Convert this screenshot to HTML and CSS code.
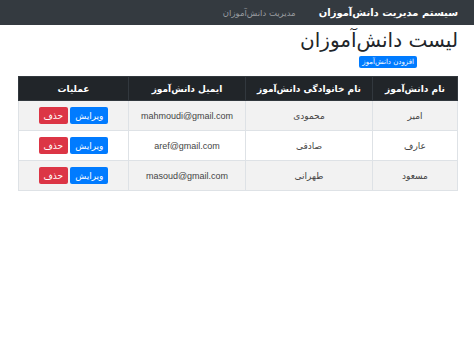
FILE: index.html
```html
<!DOCTYPE html>
<html lang="fa" dir="rtl">
<head>
    <meta charset="UTF-8">
    <meta name="viewport" content="width=device-width, initial-scale=1.0">
    <title>مدیریت دانش‌آموزان</title>
    <link rel="stylesheet" href="styles.css">
</head>
<body>
    <nav class="navbar">
        <a class="brand" href="#">سیستم مدیریت دانش‌آموزان</a>
        <a class="navLink" href="#">مدیریت دانش‌آموزان</a>
    </nav>
    <div class="container">
        <h1 class="title">لیست دانش‌آموزان</h1>
        <div class="addRow">
            <button class="btn btnPrimary btnAdd">افزودن دانش‌آموز</button>
        </div>
        <table class="table">
            <thead>
                <tr>
                    <th class="colName">نام دانش‌آموز</th>
                    <th class="colFamily">نام خانوادگی دانش‌آموز</th>
                    <th class="colEmail">ایمیل دانش‌آموز</th>
                    <th>عملیات</th>
                </tr>
            </thead>
            <tbody>
                <tr>
                    <td>امیر</td>
                    <td>محمودی</td>
                    <td class="email">mahmoudi@gmail.com</td>
                    <td><button class="btn btnPrimary">ویرایش</button><button class="btn btnDanger">حذف</button></td>
                </tr>
                <tr>
                    <td>عارف</td>
                    <td>صادقی</td>
                    <td class="email">aref@gmail.com</td>
                    <td><button class="btn btnPrimary">ویرایش</button><button class="btn btnDanger">حذف</button></td>
                </tr>
                <tr>
                    <td>مسعود</td>
                    <td>طهرانی</td>
                    <td class="email">masoud@gmail.com</td>
                    <td><button class="btn btnPrimary">ویرایش</button><button class="btn btnDanger">حذف</button></td>
                </tr>
            </tbody>
        </table>
    </div>
</body>
</html>
```
FILE: styles.css
```css
body{
    margin: 0;
    direction: rtl;
    font-family: "DejaVu Sans", "Noto Sans", sans-serif;
    color: #212529;
    background-color: #fff;
}

.navbar{
    background-color: #343a40;
    height: 25px;
    display: flex;
    align-items: center;
    padding: 0 16px;
    gap: 23px;
}

.brand{
    color: #fff;
    font-size: 10px;
    font-weight: bold;
    text-decoration: none;
}

.navLink{
    color: #9a9da0;
    font-size: 8.5px;
    text-decoration: none;
}

.container{
    padding: 0 16px 0 18px;
}

.title{
    margin: 2px 0 3px;
    font-size: 20px;
    font-weight: normal;
    line-height: 26px;
}

.addRow{
    display: flex;
    padding-right: 41px;
}

.btn{
    border: none;
    border-radius: 2px;
    color: #fff;
    font-family: inherit;
    font-size: 9px;
    padding: 0 5px;
    height: 17px;
    cursor: pointer;
}

.btnPrimary{
    background-color: #007bff;
}

.btnDanger{
    background-color: #dc3545;
    margin-right: 2px;
}

.btnAdd{
    height: 12px;
    font-size: 7px;
    padding: 0 3px;
}

.table{
    margin-top: 8px;
    width: 100%;
    border-collapse: collapse;
    font-size: 9px;
}

.table th{
    background-color: #212529;
    color: #fff;
    height: 23px;
    padding: 0;
    font-weight: bold;
    border: 1px solid #32383e;
}

.colName{
    width: 84px;
}

.colFamily{
    width: 126px;
}

.colEmail{
    width: 116px;
}

.table td{
    height: 29px;
    padding: 0;
    text-align: center;
    border: 1px solid #dee2e6;
    color: #444;
}

.table tbody tr:nth-child(odd){
    background-color: #f2f2f2;
}

.email{
    font-family: "Liberation Sans", Arial, sans-serif;
}
```
